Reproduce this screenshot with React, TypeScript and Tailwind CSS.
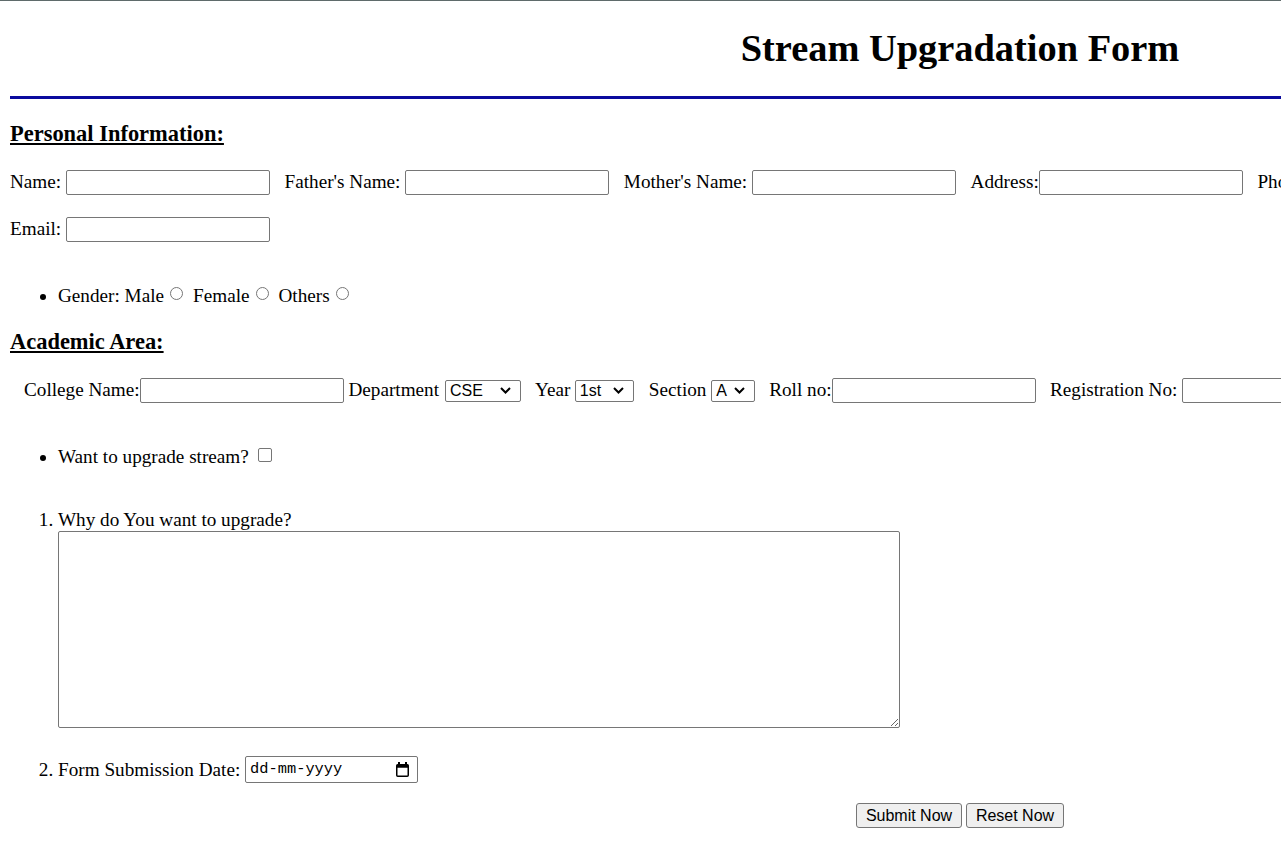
import type { ReactNode } from 'react';

const serif = "font-['Liberation_Serif','Times_New_Roman',serif]";
const sans = "font-['Liberation_Sans',Arial,sans-serif]";

function TextBox() {
  return (
    <input
      type="text"
      className="w-[204px] h-[25px] shrink-0 border border-[#767676] rounded-[2px] bg-white px-[2px] outline-none"
    />
  );
}

function Field({ label, gap = true, first = false }: { label: string; gap?: boolean; first?: boolean }) {
  return (
    <>
      <span className={first ? '' : 'ml-[14.6px]'}>{label}</span>
      <span className={gap ? 'ml-[4.8px] flex' : 'flex'}>
        <TextBox />
      </span>
    </>
  );
}

function Chevron() {
  return (
    <svg width="11" height="7" viewBox="0 0 11 7" fill="none">
      <path d="M1 1L5.5 5.5L10 1" stroke="#000" strokeWidth="2" />
    </svg>
  );
}

function FakeSelect({ value, width }: { value: string; width: string }) {
  return (
    <span
      className={`${sans} ${width} h-[22px] shrink-0 flex items-center justify-between border border-[#767676] rounded-[2px] bg-white pl-[4px] pr-[9px] text-[16px] leading-none`}
    >
      <span>{value}</span>
      <Chevron />
    </span>
  );
}

function Radio() {
  return (
    <span className="inline-block w-[13px] h-[13px] rounded-full border border-[#767676] bg-white align-[2px] ml-[6px]" />
  );
}

function CalendarIcon() {
  return (
    <svg width="15" height="15" viewBox="0 0 15 15" fill="none">
      <rect x="3" y="0" width="2" height="3" fill="#000" />
      <rect x="10" y="0" width="2" height="3" fill="#000" />
      <rect x="1.75" y="2.75" width="11.5" height="11.5" rx="1" stroke="#000" strokeWidth="1.5" />
      <rect x="1.75" y="2.75" width="11.5" height="3" fill="#000" />
    </svg>
  );
}

function Heading({ children }: { children: ReactNode }) {
  return (
    <div className="h-[25px] flex items-center">
      <h3 className="text-[22.46px] font-bold underline leading-none">{children}</h3>
    </div>
  );
}

export default function App() {
  return (
    <div className={`w-[1281px] h-[854px] overflow-hidden bg-white border-t border-[#5f6b6b] ${serif} text-[19.2px] text-black`}>
      <div className="w-[1900px] ml-[10px] whitespace-nowrap">
        {/* Title */}
        <header className="h-[95px] flex items-center justify-center">
          <h1 className="text-[38.4px] font-bold leading-none">Stream Upgradation Form</h1>
        </header>
        <div className="h-[3px] bg-[#0b0b9e]" />

        {/* Personal information */}
        <div className="mt-[23px]">
          <Heading>Personal Information:</Heading>
        </div>
        <div className="mt-[23px] h-[25px] flex items-center">
          <Field label="Name:" first />
          <Field label="Father's Name:" />
          <Field label="Mother's Name:" />
          <Field label="Address:" gap={false} />
          <Field label="Phone No:" />
        </div>
        <div className="mt-[22px] h-[25px] flex items-center">
          <Field label="Email:" first />
        </div>

        <ul className="mt-[41px] list-disc pl-[48px]">
          <li className="h-[25px] leading-[25px]">
            Gender: Male<Radio />
            <span className="ml-[10px]">Female</span>
            <Radio />
            <span className="ml-[10px]">Others</span>
            <Radio />
          </li>
        </ul>

        {/* Academic area */}
        <div className="mt-[22px]">
          <Heading>Academic Area:</Heading>
        </div>
        <div className="mt-[23px] h-[25px] flex items-center pl-[14px]">
          <span>College Name:</span>
          <TextBox />
          <span className="ml-[4.8px]">Department</span>
          <span className="ml-[6px] flex">
            <FakeSelect value="CSE" width="w-[76px]" />
          </span>
          <span className="ml-[14px]">Year</span>
          <span className="ml-[4.5px] flex">
            <FakeSelect value="1st" width="w-[59px]" />
          </span>
          <span className="ml-[15px]">Section</span>
          <span className="ml-[4.8px] flex">
            <FakeSelect value="A" width="w-[44px]" />
          </span>
          <span className="ml-[14px]">Roll no:</span>
          <TextBox />
          <span className="ml-[14.4px]">Registration No:</span>
          <span className="ml-[4.8px] flex">
            <TextBox />
          </span>
        </div>

        <ul className="mt-[41px] list-disc pl-[48px]">
          <li className="h-[25px] leading-[25px]">
            Want to upgrade stream?
            <span className="inline-block w-[14px] h-[14px] rounded-[2px] border border-[#767676] bg-white align-[1px] ml-[9px]" />
          </li>
        </ul>

        <ol className="mt-[40px] list-decimal pl-[48px]">
          <li className="leading-[22px]">
            Why do You want to upgrade?
            <textarea className="block w-[842px] h-[197px] border border-[#767676] rounded-[2px] bg-white resize outline-none" />
          </li>
          <li className="mt-[28px] h-[27px] leading-[27px]">
            Form Submission Date:
            <span className="inline-flex align-top ml-[4.8px] w-[173px] h-[27px] items-center justify-between border border-[#767676] rounded-[2px] bg-white pl-[4px] pr-[7px]">
              <span className="font-['Liberation_Mono','Courier_New',monospace] text-[15.36px] leading-none">dd-mm-yyyy</span>
              <CalendarIcon />
            </span>
          </li>
        </ol>

        <div className={`mt-[20px] flex justify-center gap-[4px] ${sans} text-[16px]`}>
          <button className="w-[106px] h-[25px] bg-[#efefef] border border-[#767676] rounded-[3px] leading-none">
            Submit Now
          </button>
          <button className="w-[98px] h-[25px] bg-[#efefef] border border-[#767676] rounded-[3px] leading-none">
            Reset Now
          </button>
        </div>
      </div>
    </div>
  );
}
